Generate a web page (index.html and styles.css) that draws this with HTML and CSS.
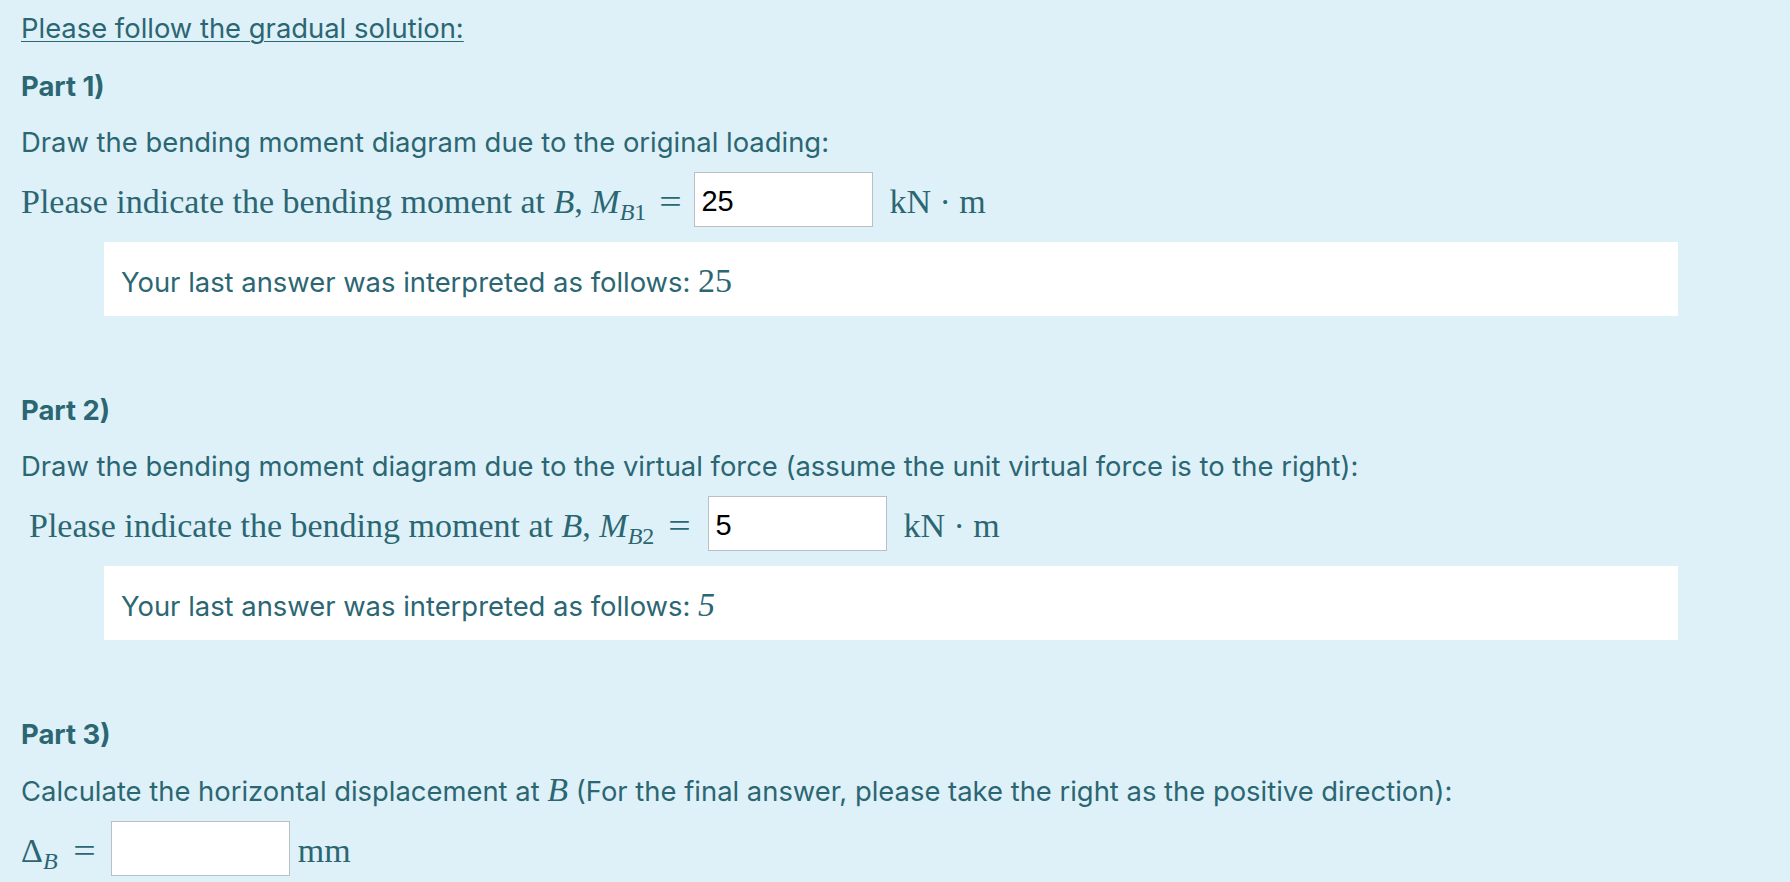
FILE: index.html
```html
<!DOCTYPE html>
<html lang="en">
<head>
  <meta charset="UTF-8">
  <title>Gradual solution</title>
  <link rel="stylesheet" href="styles.css">
</head>
<body>
  <div class="solution">
    <p class="intro">Please follow the gradual solution:</p>

    <h3 class="part-title">Part 1)</h3>
    <p class="prompt">Draw the bending moment diagram due to the original loading:</p>
    <div class="answer-row">
      <span class="math">Please indicate the bending moment at <i>B</i>, <i>M</i><sub><i>B</i>1</sub></span>
      <span class="math eq">=</span>
      <input class="answer-box" type="text" value="25">
      <span class="math unit">kN · m</span>
    </div>
    <div class="feedback">Your last answer was interpreted as follows: <span class="math">25</span></div>

    <h3 class="part-title">Part 2)</h3>
    <p class="prompt">Draw the bending moment diagram due to the virtual force (assume the unit virtual force is to the right):</p>
    <div class="answer-row indented">
      <span class="math">Please indicate the bending moment at <i>B</i>, <i>M</i><sub><i>B</i>2</sub></span>
      <span class="math eq">=</span>
      <input class="answer-box" type="text" value="5">
      <span class="math unit">kN · m</span>
    </div>
    <div class="feedback">Your last answer was interpreted as follows: <span class="math"><i>5</i></span></div>

    <h3 class="part-title">Part 3)</h3>
    <p class="prompt">Calculate the horizontal displacement at <span class="math"><i>B</i></span> (For the final answer, please take the right as the positive direction):</p>
    <div class="answer-row delta-row">
      <span class="math">Δ<sub><i>B</i></sub></span>
      <span class="math eq">=</span>
      <input class="answer-box" type="text" value="">
      <span class="math unit">mm</span>
    </div>
  </div>
</body>
</html>
```

FILE: styles.css
```css
body {
  margin: 0;
  background: #dff1f8;
  color: #2b6673;
  font-family: Inter, 'Noto Sans', sans-serif;
  font-size: 27.4px;
  line-height: 34px;
}
.solution {
  padding: 11px 0 40px 21px;
}
p {
  margin: 0;
}
.intro {
  text-decoration: underline;
  text-decoration-thickness: 1px;
  text-underline-offset: 3px;
}
.part-title {
  margin: 24px 0 0;
  font-size: 27.4px;
  font-weight: 700;
}
.feedback + .part-title {
  margin-top: 77px;
}
.prompt {
  margin-top: 22px;
}
.math {
  font-family: 'Liberation Serif', 'DejaVu Serif', serif;
  font-size: 34px;
}
.math sub {
  font-size: 24px;
  vertical-align: -7px;
  line-height: 0;
}
.answer-row {
  display: flex;
  align-items: center;
  margin-top: 13px;
  white-space: nowrap;
}
.answer-row .math {
  padding-top: 5px;
}
.answer-row.indented {
  padding-left: 8px;
}
.eq {
  display: inline-block;
  margin-left: 15px;
  transform: scaleX(1.17);
}
.indented .eq {
  margin-left: 16px;
}
.delta-row .eq {
  margin-left: 17px;
}
.answer-box {
  box-sizing: border-box;
  width: 179px;
  height: 55px;
  margin-left: 14px;
  padding: 4px 6px 0;
  border: 1px solid #b9bfc3;
  background: #fff;
  color: #000;
  font-family: 'Liberation Sans', Arial, sans-serif;
  font-size: 29px;
  outline: none;
}
.indented .answer-box {
  margin-left: 19px;
}
.delta-row .answer-box {
  margin-left: 17px;
}
.unit {
  margin-left: 16px;
}
.delta-row .unit {
  margin-left: 8px;
}
.feedback {
  box-sizing: border-box;
  height: 74px;
  margin: 15px 112px 0 83px;
  padding: 22px 17px 0;
  background: #fff;
}
```
